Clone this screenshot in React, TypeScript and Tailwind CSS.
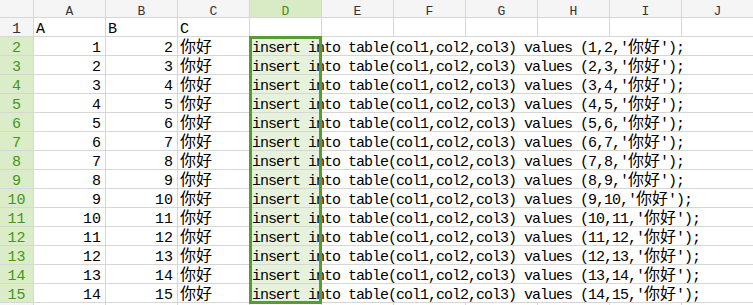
import React from "react";

const CJK = /[\u3000-\u9fff\uff00-\uffef]/;

function Txt({ s }: { s: string }) {
  const runs: { t: string; c: boolean }[] = [];
  for (const ch of s) {
    const c = CJK.test(ch);
    const last = runs[runs.length - 1];
    if (last && last.c === c) last.t += ch;
    else runs.push({ t: ch, c });
  }
  return (
    <span>
      {runs.map((r, i) =>
        r.c ? (
          <span
            key={i}
            className="font-['Noto_Sans_CJK_SC',sans-serif] text-[16px] tracking-normal leading-[12px]"
          >
            {r.t}
          </span>
        ) : (
          <span key={i}>{r.t}</span>
        )
      )}
    </span>
  );
}

const cols = ["A", "B", "C", "D", "E", "F", "G", "H", "I", "J"];

const cell = "flex items-end leading-[12px] whitespace-nowrap";

export default function App() {
  const rows = Array.from({ length: 14 }, (_, k) => k + 2);
  return (
    <div className="relative w-[753px] h-[305px] overflow-hidden bg-white">
      <div className="grid grid-cols-[33px_repeat(10,71px)] grid-rows-[17px_repeat(16,18px)] gap-px bg-[#d6d6d6] font-['Liberation_Mono','Noto_Sans_CJK_SC',monospace] text-[15px] tracking-[-1px] text-black">
        <div className="bg-[#f5f5f5]" />
        {cols.map((c) => (
          <div
            key={c}
            className={
              "flex items-end justify-center text-[13px] tracking-normal leading-[10px] " +
              (c === "D" ? "bg-[#d9ebc5] text-[#3e8f12]" : "bg-[#f5f5f5] text-[#333]")
            }
          >
            {c}
          </div>
        ))}

        {/* row 1 */}
        <div className={cell + " justify-center bg-[#f5f5f5] text-[#333] tracking-normal"}>1</div>
        <div className={cell + " bg-white pl-[2px]"}>A</div>
        <div className={cell + " bg-white pl-[2px]"}>B</div>
        <div className={cell + " bg-white pl-[2px]"}>C</div>
        {Array.from({ length: 7 }).map((_, i) => (
          <div key={i} className="bg-white" />
        ))}

        {rows.map((r) => (
          <React.Fragment key={r}>
            <div className={cell + " justify-center bg-[#dbecc8] text-[#44961a] tracking-normal"}>
              {r}
            </div>
            <div className={cell + " justify-end bg-white pr-[4px] tracking-normal"}>{r - 1}</div>
            <div className={cell + " justify-end bg-white pr-[4px] tracking-normal"}>{r}</div>
            <div className={cell + " bg-white pl-[2px]"}>
              <Txt s="你好" />
            </div>
            <div
              className={
                cell +
                " col-span-7 bg-[linear-gradient(to_right,#e6f2db_71px,#ffffff_71px)] pl-[2px]"
              }
            >
              <Txt s={`insert into table(col1,col2,col3) values (${r - 1},${r},'你好');`} />
            </div>
          </React.Fragment>
        ))}

        {/* row 16 (cut off at the bottom edge) */}
        <div className="bg-[#f5f5f5]" />
        {Array.from({ length: 10 }).map((_, i) => (
          <div key={i} className="bg-white" />
        ))}
      </div>

      <div className="pointer-events-none absolute left-[249px] top-[36px] w-[73px] h-[268px] border-[3px] border-[#5b9a30]" />
    </div>
  );
}
